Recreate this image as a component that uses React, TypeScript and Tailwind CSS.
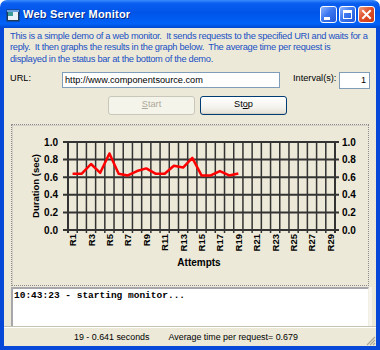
import React from 'react'

const data = [0.64, 0.64, 0.75, 0.65, 0.87, 0.64, 0.62, 0.67, 0.7, 0.64, 0.64, 0.73, 0.71, 0.82, 0.62, 0.62, 0.67, 0.62, 0.641]

// plot box in page coordinates
const L = 68
const R = 335
const T = 143
const B = 231
const CATS = 29
const cw = (R - L) / CATS
const yOf = (v: number) => B - v * (B - T)

const sans = { fontFamily: '"Liberation Sans", Arial, sans-serif' }

function Chart() {
  const ticks = [1, 0.8, 0.6, 0.4, 0.2, 0]
  const pts = data.map((v, i) => `${L + cw * (i + 0.5)},${yOf(v)}`).join(' ')
  return (
    <svg width="356" height="160" viewBox="12 126 356 160" className="block" style={sans}>
      {Array.from({ length: CATS + 1 }).map((_, k) => (
        <line key={k} x1={L + k * cw} x2={L + k * cw} y1={T} y2={B + 3} stroke="#333" strokeWidth={k === 0 || k === CATS ? 2 : 1.5} />
      ))}
      {ticks.map((t, j) => (
        <line key={j} x1={L - 5} x2={R + 4} y1={yOf(t)} y2={yOf(t)} stroke="#333" strokeWidth="2" />
      ))}
      {ticks.map(t => (
        <text key={'l' + t} x={58} y={yOf(t) + 3.5} textAnchor="end" fontSize="10" fontWeight="bold" fill="#000">{t.toFixed(1)}</text>
      ))}
      {ticks.map(t => (
        <text key={'r' + t} x={342} y={yOf(t) + 3.5} fontSize="10" fontWeight="bold" fill="#000">{t.toFixed(1)}</text>
      ))}
      {Array.from({ length: 15 }).map((_, n) => {
        const i = n * 2
        const x = L + cw * (i + 0.5)
        return (
          <text key={'x' + i} transform={`translate(${x + 3.5},235) rotate(-90)`} textAnchor="end" fontSize="9.5" fontWeight="bold" fill="#000">R{i + 1}</text>
        )
      })}
      <text transform="translate(39,187) rotate(-90)" textAnchor="middle" fontSize="9.5" fontWeight="bold" fill="#000">Duration (sec)</text>
      <text x={199} y={267} textAnchor="middle" fontSize="10" fontWeight="bold" fill="#000">Attempts</text>
      <polyline points={pts} fill="none" stroke="#ff0000" strokeWidth="2.5" strokeLinejoin="round" />
    </svg>
  )
}

function TitleButton({ kind }: { kind: 'min' | 'max' | 'close' }) {
  const bg = kind === 'close'
    ? 'bg-[linear-gradient(135deg,#f0a080_0%,#e0502a_45%,#c83a16_100%)]'
    : 'bg-[linear-gradient(135deg,#8fb4ff_0%,#3c78f0_45%,#2356d8_100%)]'
  return (
    <div className={`w-[17px] h-[17px] rounded-[3px] border border-white flex items-center justify-center ${bg}`}>
      {kind === 'min' && <div className="w-[6px] h-[3px] bg-white mt-[8px] mr-[4px]" />}
      {kind === 'max' && <div className="w-[9px] h-[9px] border border-white border-t-[3px]" />}
      {kind === 'close' && (
        <svg width="11" height="11" viewBox="0 0 11 11">
          <path d="M2 2 L9 9 M9 2 L2 9" stroke="#fff" strokeWidth="2" strokeLinecap="square" />
        </svg>
      )}
    </div>
  )
}

export default function App() {
  return (
    <div className="w-[380px] h-[350px] flex flex-col bg-white" style={sans}>
      {/* title bar */}
      <div className="h-[28px] shrink-0 flex items-center pl-[6px] pr-[5px] rounded-t-[7px] bg-[linear-gradient(to_bottom,#3b8cff_0%,#0a5ef0_12%,#0054e8_45%,#0062f8_85%,#0048d0_100%)]">
        <svg width="14" height="13" viewBox="0 0 14 13" className="mt-[2px]">
          <rect x="0.5" y="0.5" width="13" height="12" fill="#1c3a5a" />
          <rect x="2" y="3" width="10" height="8" fill="#e8f0f8" />
          <rect x="2" y="3" width="5" height="4" fill="#3a9a9a" />
          <rect x="1" y="1" width="12" height="2" fill="#6aa0e0" />
        </svg>
        <div className="ml-[3px] text-white font-bold text-[11px] tracking-[0.2px] [text-shadow:1px_1px_0_#0a2a80]">Web Server Monitor</div>
        <div className="ml-auto flex gap-[2px]">
          <TitleButton kind="min" />
          <TitleButton kind="max" />
          <TitleButton kind="close" />
        </div>
      </div>

      {/* body */}
      <div className="flex-1 flex flex-col bg-[#ece9d8] border-x-4 border-b-4 border-[#0848d8]">
        <p className="pt-[3px] px-[6px] text-[9.3px] tracking-[-0.3px] leading-[11.3px] text-[#2050c4] whitespace-nowrap">
          This is a simple demo of a web monitor.&nbsp; It sends requests to the specified URI and waits for a<br />
          reply.&nbsp; It then graphs the results in the graph below.&nbsp; The average time per request is<br />
          displayed in the status bar at the bottom of the demo.
        </p>

        <div className="flex items-start mt-[6px] h-[18px] text-[9.2px]">
          <span className="ml-[6px] mt-[1px] w-[52px]">URL:</span>
          <div className="mt-[1px] w-[218px] h-[16px] bg-white border border-[#7f9db9] px-[2px] leading-[14px]">http://www.componentsource.com</div>
          <span className="ml-[13px] mt-[1px] w-[46px]">Interval(s):</span>
          <div className="mt-[1px] w-[31px] h-[17px] bg-white border border-[#7f9db9] px-[3px] text-right leading-[15px]">1</div>
        </div>

        <div className="flex mt-[7px] ml-[104px] gap-[5px] text-[9.2px]">
          <div className="w-[87px] h-[19px] rounded-[3px] border border-[#c9c7ba] bg-[#f5f4ea] flex items-center justify-center text-[#aca899]">
            <span><u>S</u>tart</span>
          </div>
          <div className="w-[87px] h-[19px] rounded-[3px] border border-[#003c74] bg-[linear-gradient(to_bottom,#ffffff_0%,#f4f3ee_60%,#e3e0d3_100%)] flex items-center justify-center text-black shadow-[inset_0_-1px_0_#d6d0c5]">
            <span>St<u>o</u>p</span>
          </div>
        </div>

        <div className="mt-[9px] mx-[7px] h-[162px] border border-dotted border-[#8c8c8c] shadow-[inset_1px_1px_0_#d4d0c8]">
          <Chart />
        </div>

        <div className="mt-[1px] ml-[7px] mr-[4px] flex">
          <div className="flex-1 h-[39px] bg-white border-l-2 border-t-2 border-[#a7a6aa] border-r border-r-[#f1efe2] px-[1px] pt-[1px]">
            <div className="text-[9.5px] font-bold leading-[12px]" style={{ fontFamily: '"Liberation Mono", "Courier New", monospace' }}>
              10:43:23 - starting monitor...
            </div>
          </div>
          <div className="w-[3px] bg-[#f5f4ee]" />
        </div>

        <div className="flex-1 flex items-center pt-[3px] border-t border-[#c5c2b2] shadow-[inset_0_1px_0_#ffffff] text-[8.9px] relative">
          <span className="ml-[70px]">19 - 0.641 seconds</span>
          <span className="ml-[19px]">Average time per request= 0.679</span>
          <svg width="10" height="10" viewBox="0 0 10 10" className="absolute right-0 bottom-0">
            <path d="M9 1 L1 9 M9 4 L4 9 M9 7 L7 9" stroke="#aca899" strokeWidth="1.2" />
          </svg>
        </div>
      </div>
    </div>
  )
}
